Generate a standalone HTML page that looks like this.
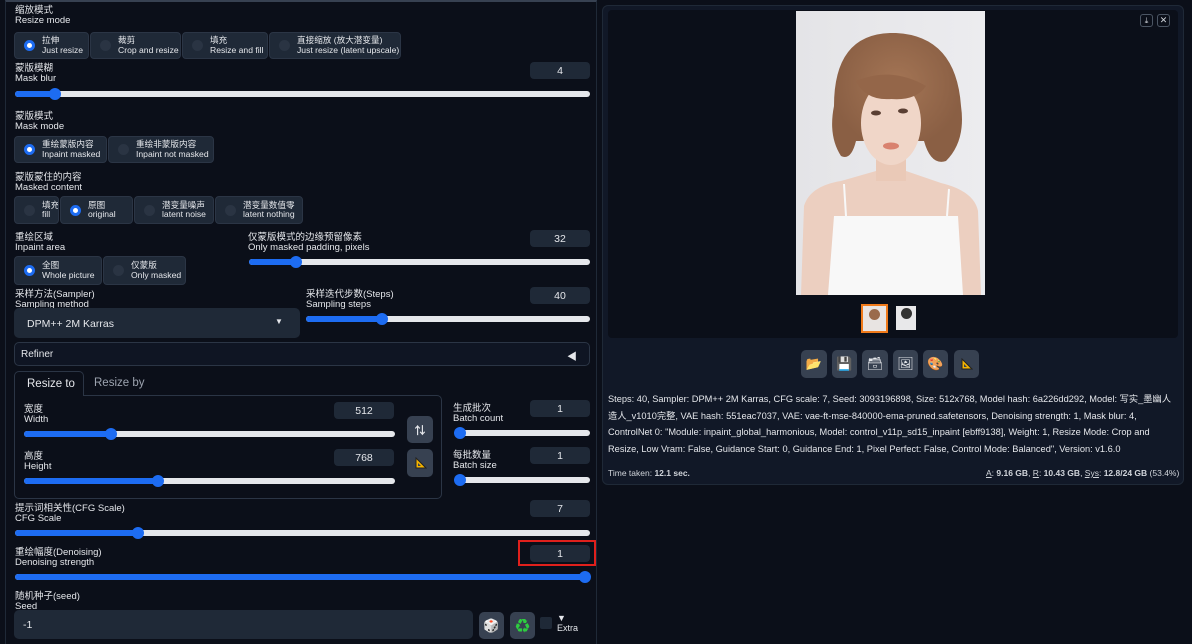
<!DOCTYPE html>
<html><head><meta charset="utf-8"><style>
*{box-sizing:border-box;margin:0;padding:0}
body{width:1192px;height:644px;background:#0b0f19;font-family:"Liberation Sans","Noto Sans CJK SC",sans-serif;color:#e5e7eb;position:relative;overflow:hidden}
.a{position:absolute}
.lb{position:absolute;font-size:9.5px;line-height:9.5px;color:#e5e7eb;white-space:nowrap}
.rg{position:absolute;display:flex;gap:1px}
.ri{background:#1f2937;border:1px solid #2b3545;border-radius:4px;display:flex;align-items:center;padding-left:9px;font-size:8.6px;line-height:9.5px;height:100%;white-space:nowrap;overflow:hidden}
.rd{width:11px;height:11px;border-radius:50%;background:#2a3443;margin-right:7px;flex:none}
.rd.on{background:#fff;border:3px solid #1d6cf2}
.nb{position:absolute;width:60px;height:17px;background:#1f2937;border-radius:4px;font-size:10.5px;display:flex;align-items:center;justify-content:center}
.sl{position:absolute;height:6px;background:#e5e7eb;border-radius:3px}
.sl i{position:absolute;left:0;top:0;height:6px;background:#1d6cf2;border-radius:3px}
.sl b{position:absolute;top:-3px;width:12px;height:12px;border-radius:50%;background:#1d6cf2;margin-left:-6px}
.bt{position:absolute;background:#374151;border-radius:5px;display:flex;align-items:center;justify-content:center;font-size:13px}
</style></head><body>
<div class="a" style="left:5px;top:0;width:592px;height:644px;border-left:1px solid #1f2937;border-right:1px solid #1f2937;border-top:2px solid #374151"></div>

<div class="lb" style="left:15px;top:6px">缩放模式<br>Resize mode</div>
<div class="rg" style="left:14px;top:32px;height:27px">
<div class="ri" style="width:75px"><span class="rd on"></span><span>拉伸<br>Just resize</span></div>
<div class="ri" style="width:91px"><span class="rd"></span><span>裁剪<br>Crop and resize</span></div>
<div class="ri" style="width:86px"><span class="rd"></span><span>填充<br>Resize and fill</span></div>
<div class="ri" style="width:132px"><span class="rd"></span><span>直接缩放 (放大潜变量)<br>Just resize (latent upscale)</span></div>
</div>

<div class="lb" style="left:15px;top:64px">蒙版模糊<br>Mask blur</div>
<div class="nb" style="left:530px;top:62px">4</div>
<div class="sl" style="left:15px;top:91px;width:575px"><i style="width:40px"></i><b style="left:40px"></b></div>

<div class="lb" style="left:15px;top:112px">蒙版模式<br>Mask mode</div>
<div class="rg" style="left:14px;top:136px;height:27px">
<div class="ri" style="width:93px"><span class="rd on"></span><span>重绘蒙版内容<br>Inpaint masked</span></div>
<div class="ri" style="width:106px"><span class="rd"></span><span>重绘非蒙版内容<br>Inpaint not masked</span></div>
</div>

<div class="lb" style="left:15px;top:173px">蒙版蒙住的内容<br>Masked content</div>
<div class="rg" style="left:14px;top:196px;height:28px">
<div class="ri" style="width:45px"><span class="rd"></span><span>填充<br>fill</span></div>
<div class="ri" style="width:73px"><span class="rd on"></span><span>原图<br>original</span></div>
<div class="ri" style="width:80px"><span class="rd"></span><span>潜变量噪声<br>latent noise</span></div>
<div class="ri" style="width:88px"><span class="rd"></span><span>潜变量数值零<br>latent nothing</span></div>
</div>

<div class="lb" style="left:15px;top:233px">重绘区域<br>Inpaint area</div>
<div class="rg" style="left:14px;top:256px;height:29px">
<div class="ri" style="width:88px"><span class="rd on"></span><span>全图<br>Whole picture</span></div>
<div class="ri" style="width:83px"><span class="rd"></span><span>仅蒙版<br>Only masked</span></div>
</div>
<div class="lb" style="left:248px;top:233px">仅蒙版模式的边缘预留像素<br>Only masked padding, pixels</div>
<div class="nb" style="left:530px;top:230px">32</div>
<div class="sl" style="left:249px;top:259px;width:341px"><i style="width:47px"></i><b style="left:47px"></b></div>

<div class="lb" style="left:15px;top:290px">采样方法(Sampler)<br>Sampling method</div>
<div class="a" style="left:14px;top:308px;width:286px;height:30px;background:#1f2937;border-radius:5px;font-size:10.5px;padding:10px 0 0 13px">DPM++ 2M Karras<span class="a" style="left:261px;top:9px;font-size:8px">▼</span></div>
<div class="lb" style="left:306px;top:290px">采样迭代步数(Steps)<br>Sampling steps</div>
<div class="nb" style="left:530px;top:287px">40</div>
<div class="sl" style="left:306px;top:316px;width:284px"><i style="width:76px"></i><b style="left:76px"></b></div>

<div class="a" style="left:14px;top:342px;width:576px;height:24px;border:1px solid #2b3545;border-radius:5px;background:#0f1523;font-size:10px;padding:6px 0 0 6px">Refiner<span class="a" style="right:12px;top:5px;font-size:10px">◀</span></div>

<div class="a" style="left:14px;top:371px;width:70px;height:25px;border:1px solid #2b3545;border-bottom:none;border-radius:5px 5px 0 0;background:#0b0f19;font-size:11.5px;padding:6px 0 0 12px;z-index:2">Resize to</div>
<div class="a" style="left:94px;top:377px;font-size:11.5px;color:#9ca3af">Resize by</div>
<div class="a" style="left:14px;top:395px;width:428px;height:104px;border:1px solid #2b3545;border-radius:0 5px 5px 5px"></div>
<div class="lb" style="left:24px;top:405px">宽度<br>Width</div>
<div class="nb" style="left:334px;top:402px">512</div>
<div class="sl" style="left:24px;top:431px;width:371px"><i style="width:87px"></i><b style="left:87px"></b></div>
<div class="lb" style="left:24px;top:452px">高度<br>Height</div>
<div class="nb" style="left:334px;top:449px">768</div>
<div class="sl" style="left:24px;top:478px;width:371px"><i style="width:134px"></i><b style="left:134px"></b></div>
<div class="bt" style="left:407px;top:416px;width:26px;height:27px;font-size:11px;font-weight:bold">⇅</div>
<div class="bt" style="left:407px;top:449px;width:26px;height:28px"><svg width="13" height="13" viewBox="0 0 13 13"><path d="M2 1 L12 11 L2 11 Z" fill="#f5b400" stroke="#222" stroke-width="1"/><path d="M4 6 L7 9 L4 9Z" fill="#374151"/></svg></div>

<div class="lb" style="left:453px;top:404px">生成批次<br>Batch count</div>
<div class="nb" style="left:530px;top:400px">1</div>
<div class="sl" style="left:455px;top:430px;width:135px"><b style="left:5px"></b></div>
<div class="lb" style="left:453px;top:451px">每批数量<br>Batch size</div>
<div class="nb" style="left:530px;top:447px">1</div>
<div class="sl" style="left:455px;top:477px;width:135px"><b style="left:5px"></b></div>

<div class="lb" style="left:15px;top:504px">提示词相关性(CFG Scale)<br>CFG Scale</div>
<div class="nb" style="left:530px;top:500px">7</div>
<div class="sl" style="left:15px;top:530px;width:575px"><i style="width:123px"></i><b style="left:123px"></b></div>

<div class="lb" style="left:15px;top:548px">重绘幅度(Denoising)<br>Denoising strength</div>
<div class="nb" style="left:530px;top:545px">1</div>
<div class="a" style="left:518px;top:540px;width:78px;height:26px;border:2px solid #e0201c"></div>
<div class="sl" style="left:15px;top:574px;width:575px"><i style="width:570px"></i><b style="left:570px"></b></div>

<div class="lb" style="left:15px;top:592px">随机种子(seed)<br>Seed</div>
<div class="a" style="left:14px;top:610px;width:459px;height:29px;background:#1f2937;border-radius:5px;font-size:10.5px;padding:9px 0 0 9px">-1</div>
<div class="bt" style="left:479px;top:612px;width:25px;height:27px">🎲</div>
<div class="bt" style="left:510px;top:612px;width:25px;height:27px;color:#2ecc40;font-size:14px">♻</div>
<div class="a" style="left:540px;top:617px;width:12px;height:12px;background:#1f2937;border-radius:2px"></div>
<div class="a" style="left:557px;top:613px;font-size:9px;line-height:10px">▼<br>Extra</div>

<!-- right -->
<div class="a" style="left:602px;top:5px;width:582px;height:480px;background:#111827;border:1px solid #1f2937;border-radius:6px"></div>
<div class="a" style="left:608px;top:10px;width:570px;height:328px;background:#0b0f19;border-radius:4px"></div>
<svg class="a" style="left:796px;top:11px" width="189" height="284" viewBox="0 0 189 284">
<defs><linearGradient id="bg" x1="0" x2="1"><stop offset="0" stop-color="#e4e4e7"/><stop offset="1" stop-color="#ececef"/></linearGradient>
<radialGradient id="hr" cx=".5" cy=".4"><stop offset="0" stop-color="#a47555"/><stop offset="1" stop-color="#8a5f44"/></radialGradient></defs>
<rect width="189" height="284" fill="url(#bg)"/>
<path d="M5 284 L8 195 Q14 175 45 170 L80 160 L110 160 L145 172 Q178 180 182 200 L185 284Z" fill="#eccfc0"/>
<rect x="80" y="135" width="30" height="35" fill="#eac9b7"/>
<path d="M38 95 Q38 20 100 22 Q160 25 165 95 Q170 130 150 150 Q135 155 128 130 L60 130 Q55 150 45 145 Q32 125 38 95Z" fill="url(#hr)"/>
<ellipse cx="95" cy="112" rx="30" ry="42" fill="#f0d6c8"/>
<path d="M60 70 Q95 55 130 75 Q120 90 95 88 Q70 90 60 70Z" fill="#946649"/>
<ellipse cx="80" cy="102" rx="5" ry="2.5" fill="#5a3f33"/><ellipse cx="107" cy="100" rx="5" ry="2.5" fill="#5a3f33"/>
<ellipse cx="95" cy="135" rx="8" ry="3.5" fill="#d9826f"/>
<path d="M38 205 L162 205 L167 284 L32 284Z" fill="#f8f8f8"/>
<path d="M48 173 L50 205 M153 178 L151 205" stroke="#f8f8f8" stroke-width="2"/>
</svg>
<div class="a" style="left:1140px;top:14px;width:13px;height:13px;border:1px solid #4b5563;border-radius:3px;font-size:8px;text-align:center;line-height:11px;color:#d1d5db">⤓</div>
<div class="a" style="left:1157px;top:14px;width:13px;height:13px;border:1px solid #4b5563;border-radius:3px;font-size:9px;text-align:center;line-height:11px;color:#d1d5db">✕</div>
<div class="a" style="left:861px;top:304px;width:27px;height:29px;border:2px solid #f07a1a;background:#e8e4e2"><div style="margin:3px auto 0;width:11px;height:11px;border-radius:50%;background:#9a6b4c"></div></div>
<div class="a" style="left:896px;top:306px;width:20px;height:24px;background:#e8e8ea"><div style="margin:2px auto 0;width:11px;height:11px;border-radius:50%;background:#333"></div></div>

<div class="bt" style="left:801px;top:350px;width:26px;height:28px">📂</div>
<div class="bt" style="left:832px;top:350px;width:25px;height:28px">💾</div>
<div class="bt" style="left:862px;top:350px;width:26px;height:28px">🗃</div>
<div class="bt" style="left:893px;top:350px;width:25px;height:28px">🖼</div>
<div class="bt" style="left:923px;top:350px;width:25px;height:28px">🎨</div>
<div class="bt" style="left:954px;top:350px;width:25px;height:28px"><svg width="13" height="13" viewBox="0 0 13 13"><path d="M2 1 L12 11 L2 11 Z" fill="#f5b400" stroke="#222" stroke-width="1"/><path d="M4 6 L7 9 L4 9Z" fill="#374151"/></svg></div>

<div class="a" style="left:608px;top:391px;width:580px;font-size:9.25px;line-height:16.6px;color:#e5e7eb;white-space:nowrap">Steps: 40, Sampler: DPM++ 2M Karras, CFG scale: 7, Seed: 3093196898, Size: 512x768, Model hash: 6a226dd292, Model: 写实_墨幽人<br>造人_v1010完整, VAE hash: 551eac7037, VAE: vae-ft-mse-840000-ema-pruned.safetensors, Denoising strength: 1, Mask blur: 4,<br>ControlNet 0: "Module: inpaint_global_harmonious, Model: control_v11p_sd15_inpaint [ebff9138], Weight: 1, Resize Mode: Crop and<br>Resize, Low Vram: False, Guidance Start: 0, Guidance End: 1, Pixel Perfect: False, Control Mode: Balanced", Version: v1.6.0</div>
<div class="a" style="left:608px;top:468px;font-size:8.5px;color:#d1d5db">Time taken: <b>12.1 sec.</b></div>
<div class="a" style="left:986px;top:468px;font-size:8.5px;color:#d1d5db"><u>A</u>: <b>9.16 GB</b>, <u>R</u>: <b>10.43 GB</b>, <u>Sys</u>: <b>12.8/24 GB</b> (53.4%)</div>
</body></html>
